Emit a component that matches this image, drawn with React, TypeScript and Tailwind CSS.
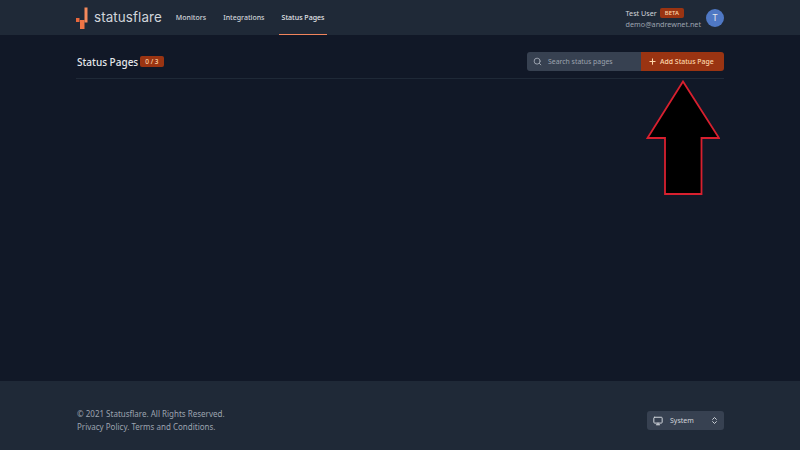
import { Search, Plus, Monitor, ChevronsUpDown } from "lucide-react";

export default function App() {
  return (
    <div className="relative flex h-[450px] w-[800px] flex-col overflow-hidden bg-[#111827] font-['Noto_Sans',sans-serif] text-[#d1d5db]">
      <header className="flex h-[35px] shrink-0 justify-center bg-[#1f2937]">
        <div className="flex w-[648px] items-center justify-between">
          <div className="flex h-full items-center">
            <svg width="13" height="22" viewBox="0 0 13 22" className="shrink-0">
              <rect x="0" y="11" width="3.5" height="4" fill="#e8673c" />
              <rect x="4" y="13" width="4.5" height="9" fill="#ef7445" />
              <rect x="8.5" y="0.5" width="3" height="15" fill="#f58a5c" />
            </svg>
            <span className="ml-[5px] font-['Inter',sans-serif] text-[13.4px] leading-none tracking-[0.1px] text-[#d1d5db]">statusflare</span>
            <nav className="ml-[14px] flex h-full gap-[17px] pt-[2px] text-[7px] font-medium">
              <a className="flex items-center text-[#d1d5db]">Monitors</a>
              <a className="flex items-center text-[#d1d5db]">Integrations</a>
              <a className="-mx-[3px] flex items-center border-b border-[#f0845c] px-[3px] text-[#e5e7eb]">Status Pages</a>
            </nav>
          </div>
          <div className="flex items-center">
            <div className="flex flex-col pt-[2px] text-[7.2px] leading-[11px]">
              <div className="flex items-center gap-[3px] text-[#d1d5db]">
                Test User
                <span className="rounded-[2px] bg-[#9a3412] px-[5px] text-[6px] font-medium leading-[10px] text-[#fed7aa]">BETA</span>
              </div>
              <span className="text-[#9ca3af]">demo@andrewnet.net</span>
            </div>
            <div className="ml-[5px] flex h-[18px] w-[18px] items-center justify-center rounded-full bg-[#4f78c4] text-[9px] text-[#e5e7eb]">T</div>
          </div>
        </div>
      </header>
      <main className="flex flex-1 justify-center">
        <div className="w-[648px] pt-[17px]">
          <div className="flex items-start justify-between border-b border-[#1f2937] pb-[7px]">
            <div className="flex h-[19px] items-center">
              <h1 className="pl-[1px] pt-[1px] text-[10px] font-medium text-[#e5e7eb]">Status Pages</h1>
              <span className="ml-[2px] rounded-[2px] bg-[#9a3412] px-[5px] text-[6.5px] font-medium leading-[11px] text-[#fed7aa]">0 / 3</span>
            </div>
            <div className="flex h-[19px] overflow-hidden rounded-[3px] text-[6.9px]">
              <div className="flex w-[114px] items-center bg-[#374151] pl-[6px] text-[#9ca3af]">
                <Search size={9} strokeWidth={2.6} className="text-[#9ca3af]" />
                <span className="ml-[6px] pt-[1px]">Search status pages</span>
              </div>
              <button className="flex w-[83px] items-center bg-[#9a3412] pl-[7px] font-medium text-[#fed7aa]">
                <Plus size={9} strokeWidth={2.8} />
                <span className="ml-[3px] pt-[1px]">Add Status Page</span>
              </button>
            </div>
          </div>
        </div>
      </main>
      <footer className="flex h-[69px] shrink-0 justify-center bg-[#1f2937] pt-[10px]">
        <div className="flex w-[648px] items-center justify-between">
          <div className="pb-[2px] pl-[1px] text-[8px] leading-[13px] text-[#9ca3af]">
            <p>© 2021 Statusflare. All Rights Reserved.</p>
            <p>Privacy Policy. Terms and Conditions.</p>
          </div>
          <div className="flex h-[19px] w-[77px] items-center rounded-[3px] bg-[#374151] pl-[6px] text-[7px] text-[#d1d5db]">
            <Monitor size={10} strokeWidth={2.4} />
            <span className="ml-[7px] pt-[1px]">System</span>
            <ChevronsUpDown size={9} strokeWidth={2.6} className="ml-auto mr-[5px]" />
          </div>
        </div>
      </footer>
      <svg width="74" height="116" viewBox="0 0 74 116" className="absolute left-[646px] top-[80px]">
        <polygon points="37,1.5 73,58 55.5,58 55.5,114 19,114 19,58 1.5,58" fill="#000" stroke="#d8202f" strokeWidth="1.8" />
      </svg>
    </div>
  );
}
